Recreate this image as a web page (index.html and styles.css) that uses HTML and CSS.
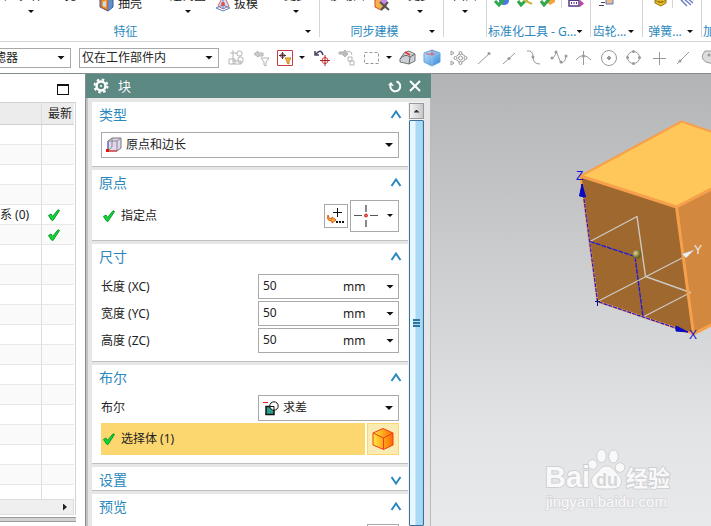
FILE: index.html
```html
<!DOCTYPE html>
<html lang="zh-CN">
<head>
<meta charset="utf-8">
<title>块</title>
<link rel="stylesheet" href="styles.css">
</head>
<body>
<svg class="defs" aria-hidden="true">
  <defs>
    <linearGradient id="cubeFill" x1="0" x2="1"><stop offset="0" stop-color="#ffe93c"/><stop offset="1" stop-color="#ff6a00"/></linearGradient>
    <linearGradient id="blueFill" x1="0" x2="1" y1="0" y2="1"><stop offset="0" stop-color="#cfe8ff"/><stop offset="1" stop-color="#2f86d8"/></linearGradient>
    <symbol id="check" viewBox="0 0 12 12"><path d="M.5 6.500 3 5l1.500 2.500L10 .8l1.500.7L5 11.500 3.500 11z" fill="#12d83a" stroke="#0b9a28"/></symbol>
    <symbol id="chev" viewBox="0 0 12 10"><path d="M1.500 8 6 1.500 10.500 8" fill="none" stroke="#2b88bd" stroke-width="2"/></symbol>
    <symbol id="cube" viewBox="0 0 24 24"><path d="M2 6 12 1.500 22 6v12l-9.500 4.500L2 18z" fill="url(#cubeFill)" stroke="#f03c14"/><path d="m2 6 10.500 5L22 6M12.500 11v11" fill="none" stroke="#f03c14"/></symbol>
  </defs>
</svg>

<header class="ribbon">
  <section class="group features">
    <div class="tools">
      <button class="tall">面<i class="blank"></i></button>
      <button class="tall">拉伸<i></i></button>
      <button class="tall">孔<i class="blank"></i></button>
      <button class="small"><svg width="16" height="16" viewBox="0 0 16 16"><path d="M1 3h8l5-2v10l-5 4-8-4z" fill="#5e8fd0" stroke="#345a9a"/><path d="m2 4 7-1-1 11-6-3z" fill="#f29a2e" stroke="#c8602a"/><path d="m4 6 3-1v6l-3-1z" fill="#c9dcf5"/></svg>抽壳</button>
      <button class="tall">边倒圆<i></i></button>
      <button class="small"><svg width="16" height="16" viewBox="0 0 16 16"><path d="m3 10 4-8h3l4 8-6 3z" fill="#cfe0f8" stroke="#e06060"/><path d="M8 1v12M1 12l7-3 7 3-7 3z" fill="none" stroke="#5a86d0"/><circle cx="8" cy="8" r="2" fill="#e8503c"/></svg>拔模</button>
      <button class="tall">更多<i></i></button>
    </div>
    <div class="caption"><span>特征</span><i></i></div>
  </section>
  <section class="group sync">
    <div class="tools">
      <button class="tall">移动面<i class="blank"></i></button>
      <button class="small" aria-label="删除面"><svg width="16" height="16" viewBox="0 0 16 16"><path d="M1 4 6 1l6 2v8l-5 3-6-3z" fill="#f5b04a" stroke="#d04c30"/><path d="m6 1 7 1v7L7 7z" fill="#c98ae6"/><path d="m6 6 9 8M14 6l-7 8" stroke="#555" stroke-width="2"/></svg></button>
      <button class="tall">更多<i></i></button>
    </div>
    <div class="caption"><span>同步建模</span><i></i></div>
  </section>
  <section class="group surface">
    <div class="tools"><button class="tall">曲面<i></i></button></div>
  </section>
  <section class="group standard">
    <div class="tools">
      <button class="small upper" aria-label="检查"><svg width="16" height="16" viewBox="0 0 16 16"><ellipse cx="10" cy="10" rx="5" ry="4" fill="#4a78e0"/><path d="m1 10 4 4 6-7" fill="none" stroke="#2fa84a" stroke-width="3"/></svg></button>
      <button class="small upper" aria-label="曲线检查"><svg width="16" height="16" viewBox="0 0 16 16"><path d="m1 10 3 4 8-8" fill="none" stroke="#2fa84a" stroke-width="3"/><path d="m7 9 8 4" stroke="#d0b83c" stroke-width="2"/></svg></button>
      <button class="small upper" aria-label="部件检查"><svg width="16" height="16" viewBox="0 0 16 16"><path d="M7 6h8v5l-5 3-4-3z" fill="#f3a53c"/><path d="m1 10 3 4 7-8" fill="none" stroke="#2fa84a" stroke-width="3"/></svg></button>
      <b></b>
      <button class="small upper" aria-label="表格"><svg width="17" height="16" viewBox="0 0 17 16"><path d="M1 4h10v11H1z" fill="#fff" stroke="#5a3a86" stroke-width="1.500"/><path d="M1 9h10M3 12h1M5.500 12h1M8 12h1" stroke="#5a3a86" stroke-width="2"/><path d="m12 9 4 3.500-4 3.500z" fill="#c040b0"/></svg></button>
    </div>
    <div class="caption"><span>标准化工具 - G...</span><i></i></div>
  </section>
  <section class="group gear">
    <div class="tools"><button class="small upper" aria-label="齿轮"><svg width="16" height="16" viewBox="0 0 16 16"><path d="M2 11.500h4M0 14.500h5" stroke="#444"/><path d="M7 4h7v9H7z" fill="#e8bc8c" stroke="#5a78c0"/></svg></button></div>
    <div class="caption"><span>齿轮...</span><i></i></div>
  </section>
  <section class="group spring">
    <div class="tools">
      <button class="small upper" aria-label="弹簧"><svg width="16" height="16" viewBox="0 0 16 16"><path d="M3 2h11v10l-5 3-6-3z" fill="#e8c02c" stroke="#9a7414"/><path d="M3 9q6 5 11 0M6 10q3 2 5 0" fill="none" stroke="#9a7414"/></svg></button>
      <b></b>
      <button class="small upper" aria-label="弹簧工具"><svg width="16" height="16" viewBox="0 0 16 16"><path d="m1 9 6 6M3 7l8 7M6 6l7 6M2 10q0-6 9-8M9 4l5 5" fill="none" stroke="#7480c4" stroke-width="1.500"/></svg></button>
    </div>
    <div class="caption"><span>弹簧...</span><i></i></div>
  </section>
  <section class="group extra">
    <div class="tools"><button class="small upper" aria-label="加工"><svg width="16" height="16" viewBox="0 0 16 16"><path d="M10 3h6v10h-6z" fill="#efe6a0" stroke="#a0a090"/></svg></button></div>
    <div class="caption"><span>加</span></div>
  </section>
</header>

<nav class="toolbar">
  <div class="drop filter"><select aria-label="过滤器"><option>滤器</option></select></div>
  <div class="drop scope"><select aria-label="范围"><option>仅在工作部件内</option></select></div>
  <div class="iconset">
    <button aria-label="装配"><svg class="ico" viewBox="0 0 18 18"><path d="M2 4h7M5 1v14M1 10h6v5H1zM5 12h8v3H6" fill="none"/><rect x="9" y="2" width="5" height="5" rx="2"/><rect x="10" y="8" width="5" height="6" rx="2"/></svg></button>
    <button aria-label="重置过滤器"><svg class="ico" viewBox="0 0 18 18"><path d="m2 5 4-3v2h5v3H6v1z" fill="#ccc"/><path d="M9 9h8l-3 4v4l-2-1v-3z"/></svg></button>
    <button class="active" aria-label="选择过滤器"><svg width="16" height="16" viewBox="0 0 16 16"><path fill="#fff" stroke="#c93a44" d="M.5.5h15v15H.5z"/><circle cx="5.500" cy="5.500" r="2" fill="none" stroke="#744"/><path d="M5.500 2v7M2 5.500h7" stroke="#533"/><path d="M8 8h6l-2 3v3l-2-1v-2z" fill="#f6b73c" stroke="#c98a20"/></svg></button>
    <i></i>
  </div>
  <div class="iconset wide">
    <button aria-label="捕捉点"><svg width="18" height="18" viewBox="0 0 18 18"><path d="M2 2v4h4M3 5q5-6 7 1" fill="none" stroke="#446" stroke-width="1.500"/><circle cx="12" cy="11.500" r="3" fill="none" stroke="#e04040"/><path d="M12 6v11M7 11.500h10" stroke="#a02424"/></svg></button>
    <button aria-label="层级"><svg class="ico" viewBox="0 0 18 18"><path d="M1 3h4l2-2 3 4-3 3-3-3H1z" fill="#bbb"/><path d="M9 3q4-2 5 3M10 8h4v4h-4zM12 12h4v4h-4z"/></svg></button>
    <button aria-label="矩形选择"><svg class="ico dark" viewBox="0 0 18 18"><path stroke-dasharray="3 2" d="M1.500 3.500h14v11h-14z"/></svg></button>
    <i></i>
  </div>
  <div class="iconset">
    <button aria-label="着色"><svg width="18" height="18" viewBox="0 0 18 18"><path d="m1 10 4-6 5-2 6 3v7l-6 3-9-2z" fill="#ccd1d8" stroke="#777"/><path d="m10 15 1-7 5-3M1 10q5-6 10-2" fill="none" stroke="#666"/><path d="m6 3 5 3" stroke="#e33" stroke-width="1.500"/></svg></button>
    <button aria-label="块"><svg width="18" height="18" viewBox="0 0 18 18"><path d="m1 4 8-3 8 3v9l-8 4-8-4z" fill="url(#blueFill)" stroke="#5da4e0"/><path d="m1 4 8 3 8-3M9 7v10" fill="none" stroke="#8cc4f0"/><path d="M9 1v6M3 5h9" stroke="#e05a6a"/></svg></button>
  </div>
  <div class="iconset wide snaps">
    <button aria-label="移动"><svg class="ico" viewBox="0 0 18 18"><path d="m1 2 3 2-3 2zM1 12l3 2-3 2z"/><circle cx="10.500" cy="9" r="2"/><circle cx="10.500" cy="4" r="1.500"/><circle cx="10.500" cy="14" r="1.500"/><circle cx="5.500" cy="9" r="1.500"/><circle cx="15.500" cy="9" r="1.500"/><path d="m6.500 7 3-2M12 5l3 2M6.500 11l3 2M12 13l3-2"/></svg></button>
    <button aria-label="端点"><svg class="ico" viewBox="0 0 18 18"><path d="M3 15 14 5"/><circle class="dot" cx="14" cy="4.500" r="1.500"/></svg></button>
    <button aria-label="中点"><svg class="ico" viewBox="0 0 18 18"><path d="M3 15 15 4"/><circle class="dot" cx="9" cy="9.500" r="1.500"/></svg></button>
    <button aria-label="控制点"><svg class="ico" viewBox="0 0 18 18"><path d="M2 2q6-1 6 6t7 7"/><circle class="dot" cx="8" cy="8" r="1.500"/></svg></button>
    <button aria-label="极点"><svg class="ico" viewBox="0 0 18 18"><path d="M1 9q4 1 5-7l5 12q5-1 5-8"/><circle class="dot" cx="2" cy="9" r="1.500"/><circle class="dot" cx="6" cy="3" r="1.500"/><circle class="dot" cx="11" cy="13" r="1.500"/><circle class="dot" cx="16" cy="7" r="1.500"/></svg></button>
    <button aria-label="交点"><svg class="ico" viewBox="0 0 18 18"><path d="M8.500 2v14M1 11q7-9 15 0"/><circle class="dot" cx="8.500" cy="7" r="1.500"/></svg></button>
    <button aria-label="圆心"><svg class="ico" viewBox="0 0 18 18"><circle cx="9" cy="9" r="7.500"/><path d="M9 7v4M7 9h4" stroke-width="2"/></svg></button>
    <button aria-label="象限点"><svg class="ico" viewBox="0 0 18 18"><circle cx="8.500" cy="8.500" r="6"/><circle class="dot" cx="8.500" cy="2.500" r="1.500"/><circle class="dot" cx="8.500" cy="14.500" r="1.500"/><circle class="dot" cx="2.500" cy="8.500" r="1.500"/><circle class="dot" cx="14.500" cy="8.500" r="1.500"/></svg></button>
    <button aria-label="现有点"><svg class="ico" viewBox="0 0 18 18"><path d="M9.500 3v13M3 9.500h13"/></svg></button>
    <button aria-label="曲线上的点"><svg class="ico" viewBox="0 0 18 18"><path d="M2 15 14 3"/><circle class="dot" cx="5" cy="12" r="1.500"/></svg></button>
    <button aria-label="面上的点"><svg class="ico" viewBox="0 0 18 18"><path d="M5 2h12v14L6 13q-7-4-1-11z" fill="#ddd"/><circle class="dot" cx="9" cy="6" r="1.500"/></svg></button>
  </div>
</nav>

<main>
  <aside class="navigator">
    <div class="navhead"><button aria-label="最大化"></button></div>
    <div class="listing">
      <div class="rows">
        <table>
          <thead><tr><th></th><th>最新</th></tr></thead>
          <tbody>
            <tr><td></td><td></td></tr><tr><td></td><td></td></tr><tr><td></td><td></td></tr><tr><td></td><td></td></tr>
            <tr><td>系 (0)</td><td><svg class="tick"><use href="#check"/></svg></td></tr>
            <tr><td></td><td><svg class="tick"><use href="#check"/></svg></td></tr>
            <tr><td></td><td></td></tr><tr><td></td><td></td></tr><tr><td></td><td></td></tr><tr><td></td><td></td></tr>
            <tr><td></td><td></td></tr><tr><td></td><td></td></tr><tr><td></td><td></td></tr><tr><td></td><td></td></tr>
            <tr><td></td><td></td></tr><tr><td></td><td></td></tr><tr><td></td><td></td></tr><tr><td></td><td></td></tr>
            <tr><td></td><td></td></tr>
          </tbody>
        </table>
      </div>
      <div class="hscroll"><button aria-label="向右滚动"></button></div>
    </div>
    <div class="splitter"></div>
  </aside>

  <form class="dialog">
    <div class="titlebar">
      <svg width="16" height="16" viewBox="0 0 16 16"><g fill="none" stroke="#fff"><circle cx="8" cy="8" r="6.500" stroke-width="2" stroke-dasharray="2.550 2.550"/><circle cx="8" cy="8" r="4.500" stroke-width="2.500"/></g><circle cx="8" cy="8" r="1" fill="#fff"/></svg>
      <h1>块</h1>
      <button type="button" aria-label="重置"><svg width="14" height="14" viewBox="0 0 14 14"><path d="M8.500 2.500a5 5 0 1 1-6 3.500" fill="none" stroke="#fff" stroke-width="2"/><path d="m0 6 3-3 3 4z" fill="#fff"/></svg></button>
      <button type="button" aria-label="关闭"><svg width="14" height="14" viewBox="0 0 14 14"><path d="m2 2 10 10M12 2 2 12" stroke="#fff" stroke-width="2"/></svg></button>
    </div>
    <div class="body">
      <div class="sections">
        <section>
          <h2>类型<svg><use href="#chev"/></svg></h2>
          <div class="fields">
            <div class="drop pick type">
              <svg width="16" height="16" viewBox="0 0 16 16"><path d="m2 4 4-3h9v10l-4 3H2z" fill="#e3d5ef" stroke="#777"/><path d="M2 4h9v10M11 4l4-3M6 1v9" fill="none" stroke="#888"/><path d="M2 4v10" stroke="#5a5ae0"/><path d="m2 14 4-4" stroke="#4c4"/><path d="M2 14h9" stroke="#e22"/><path d="M0 12h3v3H0z" fill="#e11"/></svg>
              <select aria-label="类型"><option>原点和边长</option></select>
            </div>
          </div>
        </section>
        <section>
          <h2>原点<svg><use href="#chev"/></svg></h2>
          <div class="fields">
            <div class="row tallrow">
              <span class="name"><svg class="tick"><use href="#check"/></svg>指定点</span>
              <button type="button" class="pointdlg" aria-label="点对话框"><svg width="18" height="18" viewBox="0 0 18 18"><path d="M10.500 1v9M6 5.500h9" stroke="#111"/><path d="M1 8q0 4 4 4v-2l4 3-4 3v-2q-6 0-4-6z" fill="#f9b02c" stroke="#d85a24"/><path d="M9 14h2v2H9zM12 14h2v2h-2zM15 14h2v2h-2z" fill="#111"/></svg></button>
              <div class="drop infer"><svg width="24" height="24" viewBox="0 0 24 24"><path d="M12 1v7M12 16v7" stroke="#888" stroke-width="2"/><path d="M0 11.500h8M16 11.500h8" stroke="#555"/><circle cx="12" cy="11.500" r="1.500" fill="#e66" stroke="#c22"/></svg><select aria-label="点类型"><option></option></select></div>
            </div>
          </div>
        </section>
        <section>
          <h2>尺寸<svg><use href="#chev"/></svg></h2>
          <div class="fields">
            <div class="row"><label class="name" for="xc">长度 (XC)</label><div class="drop measure"><input id="xc" value="50"><select aria-label="长度单位"><option>mm</option></select></div></div>
            <div class="row"><label class="name" for="yc">宽度 (YC)</label><div class="drop measure"><input id="yc" value="50"><select aria-label="宽度单位"><option>mm</option></select></div></div>
            <div class="row"><label class="name" for="zc">高度 (ZC)</label><div class="drop measure"><input id="zc" value="50"><select aria-label="高度单位"><option>mm</option></select></div></div>
          </div>
        </section>
        <section>
          <h2>布尔<svg><use href="#chev"/></svg></h2>
          <div class="fields">
            <div class="row"><label class="name" for="bool">布尔</label>
              <div class="drop pick bool"><svg width="16" height="16" viewBox="0 0 16 16"><path d="M0 2.500h5" stroke="#d22"/><path d="M3 6.500h8v8H3z" fill="#2aa08c" stroke="#111" stroke-width="1.500"/><circle cx="11" cy="6" r="4.200" fill="#fff" stroke="#111"/><path d="M7 6.500h4v4" fill="none" stroke="#111"/></svg><select id="bool"><option>求差</option></select></div></div>
            <div class="row tallrow"><span class="name chosen"><svg class="tick"><use href="#check"/></svg>选择体 (1)</span>
              <button type="button" class="bodybtn" aria-label="选择体"><svg width="24" height="24"><use href="#cube"/></svg></button></div>
          </div>
        </section>
        <section><h2>设置<svg class="down"><use href="#chev"/></svg></h2></section>
        <section>
          <h2>预览<svg><use href="#chev"/></svg></h2>
          <div class="fields"><div class="row tallrow"><span class="name"></span><button type="button" class="preview" aria-label="显示结果"></button></div></div>
        </section>
      </div>
      <div class="vscroll"><button type="button" aria-label="向上滚动"></button><div class="thumb"><span></span></div></div>
    </div>
  </form>

  <section class="viewport">
    <svg viewBox="431 74 280 452" preserveAspectRatio="xMinYMin slice">
      <defs><radialGradient id="ball" cx=".35" cy=".35"><stop offset="0" stop-color="#e0d890"/><stop offset="1" stop-color="#6e6428"/></radialGradient></defs>
      <g stroke-linejoin="round">
        <path d="M580.500 176 681.500 121.500 760 148v16l-83.500 43z" fill="#ffc65a"/>
        <path d="m676.500 207 83.500-43v136l-66.500 34z" fill="#d38840"/>
        <path d="m580.500 176 96 31 17 127-96-32.500z" fill="#9e682e"/>
        <path d="M580.500 176 681.500 121.500 760 148" fill="none" stroke="#f7a04b" stroke-width="2"/>
        <path d="m580.500 176 17 125.500 96 32.500" fill="none" stroke="#f7a04b" stroke-width="2"/>
        <g fill="none" stroke="#cdc8c2" stroke-width="1.400"><path d="m590 241.500 47-25 8.500 60 45 16-47.500 24.500M597.500 301.500 684 257"/></g>
        <path d="m580.500 176 96 31 83.500-43M676.500 207l17 127 66.500-34" fill="none" stroke="#f7a04b" stroke-width="3"/>
      </g>
      <path d="m682 254 12-4-8 8z" fill="#eee" stroke="#bbb" stroke-width=".5"/>
      <path d="m590 241.500 45 15 8 60.500" fill="none" stroke="#2018dc" stroke-width="1.300" stroke-dasharray="5 1"/>
      <path d="m582 184 15.500 117.500 90 30.500" fill="none" stroke="#1818e0" stroke-width="1.200" stroke-dasharray="4 1"/>
      <path d="m582 184-2.500 12 6 1zM688 332l-12-6v5z" fill="#0808d0" stroke="#0808b0"/>
      <path d="M595 301.500h5M597.500 299v7" stroke="#101080"/>
      <circle cx="637" cy="254.500" r="4.500" fill="url(#ball)"/>
      <g class="axis"><text x="576" y="180">Z</text><text x="689" y="339">X</text><text class="yaxis" x="694" y="254">Y</text></g>
      <g class="mark">
        <g stroke="#cfd0d2"><circle cx="592.500" cy="464.500" r="4.800"/><ellipse cx="601.500" cy="456" rx="4.800" ry="6.500"/><ellipse cx="613.500" cy="456.500" rx="4.800" ry="6.500"/><circle cx="620" cy="467.500" r="4.800"/><path d="M606.500 466c6 0 8 5 11 8 4 3 5 7 3 11s-7 4-14 4-12 0-14-4-1-8 3-11 5-8 11-8z"/></g>
        <text class="brand" x="545" y="487">Bai</text>
        <text class="du" x="596" y="486">du</text>
        <text class="cn" x="626" y="486">经验</text>
        <text class="url" x="546" y="507">jingyan.baidu.com</text>
      </g>
    </svg>
  </section>
</main>
</body>
</html>
```

FILE: styles.css
```css
* { box-sizing: border-box; }

body {
  margin: 0;
  height: 100vh;
  display: flex;
  flex-direction: column;
  overflow: hidden;
  background: #fff;
  color: #222;
  font: 12px/16px "Noto Sans", "Noto Sans CJK SC", sans-serif;
}

.defs { position: absolute; width: 0; height: 0; }

button, select, input {
  font: inherit;
  color: inherit;
  margin: 0;
  padding: 0;
  border: 0;
  border-radius: 0;
  background: none;
  outline: 0;
}
select { appearance: none; }
svg { display: block; flex: none; }
i {
  flex: none;
  width: 6px;
  height: 3px;
  background: #111;
  clip-path: polygon(0 0, 100% 0, 50% 100%);
}
.blank { visibility: hidden; }

/* Ribbon */
.ribbon {
  display: flex;
  height: 42px;
  flex: none;
  overflow: hidden;
  border-bottom: 1px solid #d6d6d6;
}
.group { flex: none; height: 37px; border-right: 1px solid #d4d4d4; }
.tools { display: grid; grid-template-rows: 23px; height: 23px; overflow: hidden; align-items: end; }
.tools button { white-space: nowrap; display: flex; align-items: center; }
.tall { height: 35px; flex-direction: column; gap: 6px; padding-bottom: 10px; }
.small { gap: 3px; padding-bottom: 11px; }
.tools .upper { padding-bottom: 16px; }
.tools b { width: 1px; height: 23px; padding: 0; background: linear-gradient(#d4d4d4 8px, transparent 8px); }
.caption { display: flex; align-items: center; height: 17px; padding-right: 8px; color: #2b88bd; white-space: nowrap; }
.caption span { flex: 1; text-align: center; }
.features { width: 320px; }
.features .tools { grid-template-columns: 10px 42px 36px 73px 54px 58px 46px; }
.features .tall:first-child { margin-left: -8px; }
.features .small:nth-child(4) { padding-left: 11px; }
.features .caption span { padding-right: 54px; }
.sync { width: 124px; }
.sync .tools { grid-template-columns: 54px 28px 36px; }
.surface { width: 43px; }
.standard { width: 104px; }
.standard .tools { grid-template-columns: 23px 23px 21px 7px 20px; padding-left: 7px; }
.standard .caption { padding-left: 1px; }
.gear { width: 52px; }
.gear .tools { padding-left: 8px; }
.spring { width: 59px; }
.spring .tools { grid-template-columns: 20px 8px 20px; padding-left: 9px; }
.extra { flex: 1; border: 0; }
.extra .caption { padding: 0 0 0 1px; }
.extra .caption span { text-align: left; }

/* Selection bar */
.toolbar {
  display: flex;
  align-items: center;
  flex: none;
  height: 32px;
  overflow: hidden;
  border-bottom: 1px solid #858c90;
}
.drop { position: relative; display: flex; align-items: center; border: 1px solid #a9a9a9; background: #fff; }
.drop::after {
  content: "";
  position: absolute;
  right: 5px;
  top: calc(50% - 2px);
  width: 8px;
  height: 4px;
  background: #111;
  clip-path: polygon(0 0, 100% 0, 50% 100%);
  pointer-events: none;
}
.drop select { flex: 1; min-width: 0; height: 100%; }
.toolbar .drop { flex: none; height: 20px; }
.filter { width: 83px; margin-left: -12px; padding-left: 5px; }
.scope { width: 140px; margin: 0 6px 0 8px; padding-left: 2px; }
.iconset { display: flex; flex: none; align-items: center; }
.iconset button { display: grid; place-items: center; width: 24px; height: 24px; }
.iconset i { width: 6px; margin: 0 4px 0 2px; }
.wide button { width: 25px; }
.snaps { margin-left: 2px; }
.ico { width: 18px; height: 18px; fill: none; stroke: #b4b4b4; }
.snaps .ico, .dark { stroke: #999; }
.ico .dot { fill: #999; stroke: none; }

/* Work area */
main { display: flex; flex: 1; min-height: 0; }

.navigator { display: flex; flex-direction: column; flex: none; width: 86px; padding-bottom: 4px; border-right: 1px solid #858c90; }
.navhead { display: flex; justify-content: flex-end; align-items: center; height: 28px; padding: 3px 16px 0 0; }
.navhead button { width: 12px; height: 11px; border: 1px solid #111; border-top-width: 2px; }
.listing { display: flex; flex: 1; flex-direction: column; min-height: 0; margin-right: 9px; padding-right: 1px; border: solid #d4d4d4; border-width: 1px 1px 0 0; }
.rows { flex: 1; min-height: 0; overflow: hidden; }
table { width: 100%; border-collapse: separate; border-spacing: 0; table-layout: fixed; }
th, td { height: 20px; padding: 0; border-bottom: 1px solid #e8e8e8; font-weight: 400; line-height: 16px; white-space: nowrap; text-align: left; }
th { height: 22px; background: #ececec; border-color: #cfcfcf; }
th:first-child, td:first-child { width: 42px; border-right: 1px solid #dedede; }
th:last-child, td:last-child { padding-left: 6px; }
tbody tr:nth-child(even) { background: #fafafa; }
.tick { width: 12px; height: 12px; }
.hscroll { display: flex; justify-content: flex-end; align-items: center; height: 16px; flex: none; border: 1px solid #ddd; border-left: 0; background: #efefef; }
.hscroll button { width: 4px; height: 7px; margin-right: 6px; background: #222; clip-path: polygon(0 0, 100% 50%, 0 100%); }
.splitter { height: 5px; flex: none; margin: 2px 9px 0 0; border: solid #999; border-width: 1px 0; background: #d2d2d2; }

/* Dialog */
.dialog { display: flex; flex-direction: column; flex: none; width: 345px; background: #e6e6e6; }
.titlebar { display: flex; align-items: center; flex: none; height: 24px; padding: 0 9px 0 7px; background: #5c8982; color: #fff; }
h1 { flex: 1; margin: 0 0 0 9px; font-size: 13px; font-weight: 400; line-height: 20px; }
.titlebar button + button { margin-left: 6px; }
.body { display: flex; flex: 1; min-height: 0; padding: 4px 6px 0 4px; border-left: 2px solid #bfc3c3; border-right: 1px solid #b9b9b9; }
.sections { display: flex; flex: 1; flex-direction: column; gap: 3px; min-width: 0; overflow: hidden; }
.sections section { flex: none; border-bottom: 1px solid #bfbfbf; background: #fff; }
h2 { display: flex; justify-content: space-between; align-items: center; margin: 0; padding: 3px 6px 0 7px; color: #2b88bd; font-size: 14px; font-weight: 400; line-height: 20px; }
h2 svg { width: 12px; height: 10px; }
.down { transform: rotate(180deg); }
.fields { display: flex; flex-direction: column; gap: 2px; padding: 7px 9px 8px; }
.row { display: flex; align-items: center; gap: 2px; }
.name { display: flex; flex: 1; align-items: center; gap: 6px; }
.tallrow .name { padding-left: 2px; }
.tallrow { min-height: 32px; }
.pick { height: 26px; padding-left: 4px; gap: 4px; }
.bool, .measure { width: 141px; }
.measure { height: 25px; padding-left: 4px; }
.measure input { width: 80px; height: 100%; padding-bottom: 2px; }
.measure::after { right: 4px; }
.pointdlg { display: grid; place-items: center; width: 24px; height: 24px; border: 1px solid #a9a9a9; }
.infer { width: 49px; height: 32px; padding-left: 3px; }
.infer::after { width: 6px; height: 3px; right: 5px; }
.chosen { align-self: stretch; background: #fcd76f; }
.bodybtn { display: grid; place-items: center; width: 32px; height: 32px; border: 1px solid #fcd76f; background: #faebb3; }
.preview { width: 32px; height: 32px; border: 1px solid #a9a9a9; }

.vscroll { display: flex; flex: none; flex-direction: column; gap: 1px; width: 16px; padding: 1px 0 0 1px; background: #f4f4f4; }
.vscroll button { display: grid; place-items: center; height: 16px; border: 1px solid #999; background: linear-gradient(90deg, #f4f4f4, #c8c8cc); }
.vscroll button::before { content: ""; width: 6px; height: 3px; background: #333; clip-path: polygon(50% 0, 100% 100%, 0 100%); }
.thumb { display: grid; place-items: center; flex: 1; border: 1px solid #3a719f; border-radius: 1px; background: linear-gradient(90deg, #e6f7ff 0 5px, #a9daf5 6px 12px, #8ac4e6); }
.thumb span { width: 7px; height: 8px; background: repeating-linear-gradient(#33739f 0 2px, #a9daf5 2px 3px); }

/* Graphics window */
.viewport { flex: 1; min-width: 0; overflow: hidden; background: linear-gradient(#b3b4b6, #e3e4e6 80%, #e8e9eb); }
.viewport svg { width: 100%; height: 100%; }
.axis { font: 12px "Liberation Sans", sans-serif; fill: #1414d8; }
.yaxis { fill: #ececec; }
.mark { fill: #f9f9fa; }
.mark text { paint-order: stroke; stroke: #cfd0d2; stroke-width: 2px; }
.brand { font: bold 29px "Liberation Sans", sans-serif; }
.mark .du { font: bold 18px "Liberation Sans", sans-serif; fill: #d5d6d8; stroke: none; }
.cn { font: bold 22px "Noto Sans CJK SC", sans-serif; }
.mark .url { font: 15px "Liberation Sans", sans-serif; stroke: #d9dadc; }
```
